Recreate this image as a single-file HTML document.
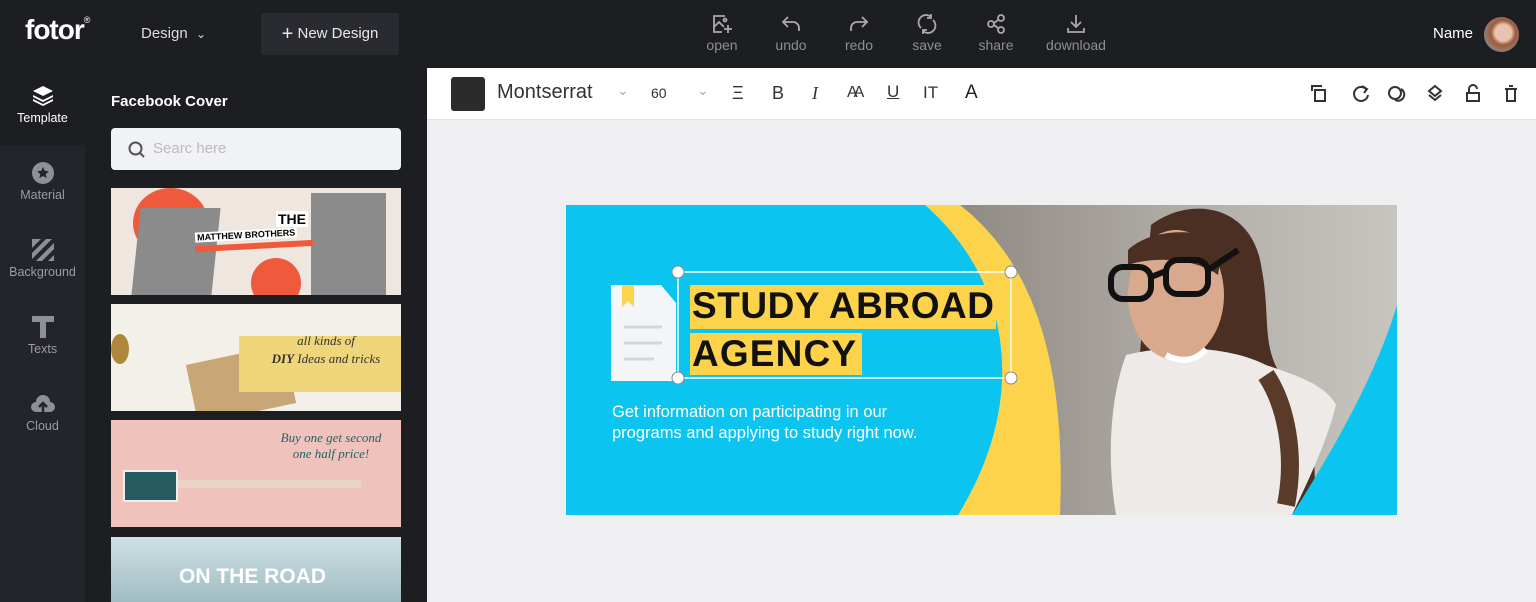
<!DOCTYPE html>
<html><head><meta charset="utf-8"><style>
*{margin:0;padding:0;box-sizing:border-box}
body{width:1536px;height:602px;overflow:hidden;background:#efeff2;font-family:"Liberation Sans",sans-serif;position:relative}
.top{position:absolute;left:0;top:0;width:1536px;height:68px;background:#1d1e22;color:#fff}
.abs{position:absolute}
.rail{position:absolute;left:0;top:68px;width:85px;height:534px;background:#24252a}
.rail .act{position:absolute;left:0;top:0;width:85px;height:77px;background:#1d1e22}
.ri{position:absolute;left:0;width:85px;text-align:center;font-size:12.5px;color:#9a9ba3}
.panel{position:absolute;left:85px;top:68px;width:342px;height:534px;background:#1d1e22}
.tb{position:absolute;left:427px;top:68px;width:1109px;height:52px;background:#fff;border-bottom:1px solid #e4e4e8}
.ti{position:absolute;top:13px;text-align:center;font-size:14px;color:#8d8e94}
.ti svg{display:block;margin:0 auto 2px}
.thumb{position:absolute;left:111px;width:290px;height:107px;overflow:hidden}
</style></head><body>
<div class="top">
 <div class="abs" style="left:25px;top:14px;font-size:28px;font-weight:bold;letter-spacing:-1px">fotor<sup style="font-size:9px;font-weight:normal;vertical-align:16px">®</sup></div>
 <div class="abs" style="left:141px;top:25px;font-size:15px;color:#ddd">Design &nbsp;<span style="font-size:12px">&#8964;</span></div>
 <div class="abs" style="left:261px;top:13px;width:138px;height:42px;background:#2a2b30;border-radius:3px;font-size:15px;color:#e8e8e8;line-height:42px;text-align:center"><span style="font-size:20px;vertical-align:-2px">+</span> New Design</div>
 <div class="ti" style="left:700px;width:44px"><svg width="22" height="22" viewBox="0 0 22 22" fill="none" stroke="#aaa" stroke-width="1.8"><path d="M14 3H3v16h8M3 14l5-5 5 5"/><circle cx="14" cy="7" r="1.5"/><path d="M17 12v8M13 16h8"/></svg>open</div>
 <div class="ti" style="left:768px;width:46px"><svg width="22" height="22" viewBox="0 0 22 22" fill="none" stroke="#aaa" stroke-width="1.8"><path d="M8 4L3 9l5 5M3 9h10a6 6 0 0 1 6 6v3"/></svg>undo</div>
 <div class="ti" style="left:838px;width:42px"><svg width="22" height="22" viewBox="0 0 22 22" fill="none" stroke="#aaa" stroke-width="1.8"><path d="M14 4l5 5-5 5M19 9H9a6 6 0 0 0-6 6v3"/></svg>redo</div>
 <div class="ti" style="left:906px;width:42px"><svg width="22" height="22" viewBox="0 0 22 22" fill="none" stroke="#aaa" stroke-width="1.8"><path d="M5 15A7 7 0 0 1 15 4M17 7a7 7 0 0 1-10 11M15 1v4h-4M7 21v-4h4"/></svg>save</div>
 <div class="ti" style="left:972px;width:48px"><svg width="22" height="22" viewBox="0 0 22 22" fill="none" stroke="#aaa" stroke-width="1.8"><circle cx="6" cy="11" r="3"/><circle cx="16" cy="5" r="3"/><circle cx="16" cy="17" r="3"/><path d="M9 10l4-3M9 12l4 3"/></svg>share</div>
 <div class="ti" style="left:1040px;width:72px"><svg width="22" height="22" viewBox="0 0 22 22" fill="none" stroke="#aaa" stroke-width="1.8"><path d="M11 2v12M6 9l5 5 5-5M3 15v4h16v-4"/></svg>download</div>
 <div class="abs" style="left:1433px;top:25px;font-size:15px">Name</div>
 <div class="abs" style="left:1484px;top:17px;width:35px;height:35px;border-radius:50%;background:radial-gradient(circle at 55% 45%,#e8c4b0 0 30%,#a05a3a 45%,#888 75%)"></div>
</div>
<div class="rail"><div class="act"></div>
 <div class="ri" style="top:16px;color:#fff"><svg width="24" height="24" viewBox="0 0 24 24" fill="#fff"><path d="M12 2l10 5-10 5L2 7z"/><path d="M2 11l10 5 10-5v2l-10 5-10-5z"/><path d="M2 15l10 5 10-5v2l-10 5-10-5z"/></svg><div>Template</div></div>
 <div class="ri" style="top:93px"><svg width="24" height="24" viewBox="0 0 24 24"><circle cx="12" cy="12" r="11" fill="#8e8f97"/><path d="M12 6l1.8 3.8 4 .5-3 2.8.8 4L12 15l-3.6 2.1.8-4-3-2.8 4-.5z" fill="#24252a"/></svg><div>Material</div></div>
 <div class="ri" style="top:170px"><svg width="24" height="24" viewBox="0 0 24 24" fill="#8e8f97"><path d="M1 1h9L1 10zM1 15L15 1h6L1 21zM5 23L23 5v6L11 23zM17 23l6-6v6z"/></svg><div>Background</div></div>
 <div class="ri" style="top:247px"><svg width="24" height="24" viewBox="0 0 24 24" fill="#8e8f97"><path d="M1 1h22v6h-8v16H9V7H1z"/></svg><div>Texts</div></div>
 <div class="ri" style="top:324px"><svg width="26" height="24" viewBox="0 0 26 24"><path d="M6 20a5 5 0 0 1 0-10 7 7 0 0 1 14 0 5 5 0 0 1 0 10z" fill="#8e8f97"/><path d="M13 20v-7M9 15l4-4 4 4" stroke="#24252a" stroke-width="2.5" fill="none"/></svg><div>Cloud</div></div>
</div>
<div class="panel">
 <div class="abs" style="left:26px;top:25px;font-size:15px;font-weight:bold;color:#fff">Facebook Cover</div>
 <div class="abs" style="left:26px;top:60px;width:290px;height:42px;background:#f1f2f5;border-radius:4px;font-size:15px;color:#bbb;line-height:42px;padding-left:42px">Searc here
  <svg class="abs" style="left:17px;top:13px" width="17" height="17" viewBox="0 0 17 17" fill="none" stroke="#555" stroke-width="2"><circle cx="7.5" cy="7.5" r="6"/><path d="M12 12l4 4"/></svg></div>
</div>
<div class="thumb" style="top:188px;background:#efe6df">
 <div class="abs" style="left:22px;top:0;width:75px;height:70px;border-radius:50%;background:#ef5a3c"></div>
 <div class="abs" style="left:140px;top:70px;width:50px;height:50px;border-radius:50%;background:#ef5a3c"></div>
 <div class="abs" style="left:25px;top:20px;width:80px;height:87px;background:#8b8b8b;transform:skew(-6deg)"></div>
 <div class="abs" style="left:200px;top:5px;width:75px;height:102px;background:#8b8b8b"></div>
 <div class="abs" style="left:165px;top:23px;font-size:14px;font-weight:bold;background:#fff;padding:0 2px">THE</div>
 <div class="abs" style="left:84px;top:42px;font-size:9px;font-weight:bold;background:#fff;padding:0 2px;transform:rotate(-3deg)">MATTHEW BROTHERS</div>
 <div class="abs" style="left:84px;top:55px;width:118px;height:6px;background:#ef5a3c;transform:rotate(-3deg)"></div>
</div>
<div class="thumb" style="top:304px;background:#f3f0ea">
 <div class="abs" style="left:80px;top:50px;width:100px;height:60px;background:#c9a676;transform:rotate(-12deg)"></div>
 <div class="abs" style="left:128px;top:32px;width:162px;height:56px;background:#f0d67a"></div>
 <div class="abs" style="left:150px;top:28px;font-size:13px;font-style:italic;color:#333;text-align:center;width:130px;line-height:18px;font-family:'Liberation Serif',serif">all kinds of<br><b>DIY</b> Ideas and tricks</div>
 <div class="abs" style="left:0;top:30px;width:18px;height:30px;border-radius:50%;background:#b0873a"></div>
</div>
<div class="thumb" style="top:420px;background:#efc3bc">
 <div class="abs" style="left:60px;top:60px;width:190px;height:8px;background:#e9d4c6"></div>
 <div class="abs" style="left:12px;top:50px;width:55px;height:32px;background:#245a60;border:2px solid #eee"></div>
 <div class="abs" style="left:160px;top:10px;font-size:13px;font-style:italic;color:#256166;text-align:center;width:120px;font-family:'Liberation Serif',serif">Buy one get second<br>one half price!</div>
</div>
<div class="thumb" style="top:537px;height:65px;background:linear-gradient(#cfe2e6,#9fbcc2)">
 <div class="abs" style="left:68px;top:28px;font-size:21px;font-weight:bold;color:#fff">ON THE ROAD</div>
</div>
<div class="tb">
 <div class="abs" style="left:24px;top:9px;width:34px;height:34px;background:#2b2b2b;border-radius:3px"></div>
 <div class="abs" style="left:70px;top:13px;font-size:20px;color:#333">Montserrat</div>
 <div class="abs" style="left:190px;top:14px;font-size:14px;color:#aaa">&#8964;</div>
 <div class="abs" style="left:224px;top:17px;font-size:14px;color:#333">60</div>
 <div class="abs" style="left:270px;top:14px;font-size:14px;color:#aaa">&#8964;</div>
 <div class="abs" style="left:305px;top:15px;font-size:18px;color:#333">&#926;</div>
 <div class="abs" style="left:345px;top:15px;font-size:18px;color:#333">B</div>
 <div class="abs" style="left:385px;top:15px;font-size:18px;font-style:italic;color:#333;font-family:'Liberation Serif',serif">I</div>
 <div class="abs" style="left:420px;top:16px;font-size:16px;color:#333;letter-spacing:-4px">AA</div>
 <div class="abs" style="left:460px;top:14px;font-size:17px;color:#333;text-decoration:underline">U</div>
 <div class="abs" style="left:496px;top:15px;font-size:17px;color:#333">IT</div>
 <div class="abs" style="left:538px;top:14px;font-size:19px;color:#222">A</div>
 <svg class="abs" style="left:880px;top:15px" width="220" height="22" viewBox="0 0 220 22" fill="none" stroke="#333" stroke-width="2">
  <path d="M5 8V3h10M8 7h10v11H8z"/>
  <path d="M59 6a7 7 0 1 0 2 6M55 3l5 3-3 4"/>
  <circle cx="88" cy="10" r="6"/><path d="M94 6a6 6 0 0 1-6 11"/>
  <path d="M128 3l-6 5 6 5 6-5zM122 12l6 5 6-5"/>
  <path d="M160 10h12v8h-12zM162 10V6a4 4 0 0 1 8 0"/>
  <path d="M198 6h12M200 6v12h8V6M202 3h4"/>
 </svg>
</div>
<svg class="abs" style="left:566px;top:205px" width="831" height="310" viewBox="0 0 831 310">
 <defs><linearGradient id="ph" x1="0" x2="1"><stop offset="0" stop-color="#8f8a82"/><stop offset="0.5" stop-color="#b0aca6"/><stop offset="1" stop-color="#c8c4bf"/></linearGradient></defs>
 <rect width="831" height="310" fill="#0bc4ef"/>
 <path d="M359 0C450 80 460 200 392 310H831V0z" fill="#fcd34b"/>
 <path d="M394 0C470 60 500 160 494 310H831V0z" fill="url(#ph)"/>
 <path d="M585 20c40-30 100-20 110 40c10 50 0 80 20 110c30 40 40 90 30 140H560z" fill="#4a2f22"/>
 <path d="M560 150c40-10 100-10 140 10c30 10 60 20 70 40c-10 40-30 80-44 110H550c-10-60-5-120 10-160z" fill="#eeeae8"/>
 <path d="M700 170c20 30 30 80 20 130" stroke="#5a3a28" stroke-width="18" fill="none"/>
 <ellipse cx="610" cy="90" rx="48" ry="65" fill="#d9a98e"/>
 <path d="M562 45c20-20 70-25 95-5l-5 30c-20-15-60-20-90-10z" fill="#4a2f22"/>
 <path d="M600 150c15 8 30 6 40-6" stroke="#fff" stroke-width="6" fill="none"/>
 <rect x="545" y="62" width="40" height="32" rx="12" fill="none" stroke="#111" stroke-width="6"/>
 <rect x="600" y="55" width="42" height="34" rx="12" fill="none" stroke="#111" stroke-width="6"/>
 <path d="M585 72l15-6M642 65l30-20" stroke="#111" stroke-width="6"/>
 <path d="M831 100C810 170 770 240 726 310H831z" fill="#0bc4ef"/>
 <path d="M45 80h50l15 18v78H45z" fill="#f3f5f8"/><path d="M56 80v22l6-6 6 6V80z" fill="#fcd34b"/>
 <path d="M58 122h38M58 138h38M58 154h30" stroke="#cfd6dd" stroke-width="3"/>
 <rect x="124" y="80" width="306" height="44" fill="#fcd34b"/><rect x="124" y="128" width="172" height="42" fill="#fcd34b"/>
 <text x="126" y="113" font-family="Liberation Sans" font-weight="bold" font-size="37" fill="#111" textLength="302">STUDY ABROAD</text>
 <text x="126" y="161" font-family="Liberation Sans" font-weight="bold" font-size="37" fill="#111" textLength="164">AGENCY</text>
 <rect x="112" y="67" width="333" height="106" fill="none" stroke="#fff" stroke-width="1.5"/>
 <g fill="#fff" stroke="#888"><circle cx="112" cy="67" r="6"/><circle cx="445" cy="67" r="6"/><circle cx="112" cy="173" r="6"/><circle cx="445" cy="173" r="6"/></g>
 <text x="46" y="212" font-family="Liberation Sans" font-size="16.5" fill="#fff">Get information on participating in our</text>
 <text x="46" y="233" font-family="Liberation Sans" font-size="16.5" fill="#fff">programs and applying to study right now.</text>
</svg>
</body></html>
